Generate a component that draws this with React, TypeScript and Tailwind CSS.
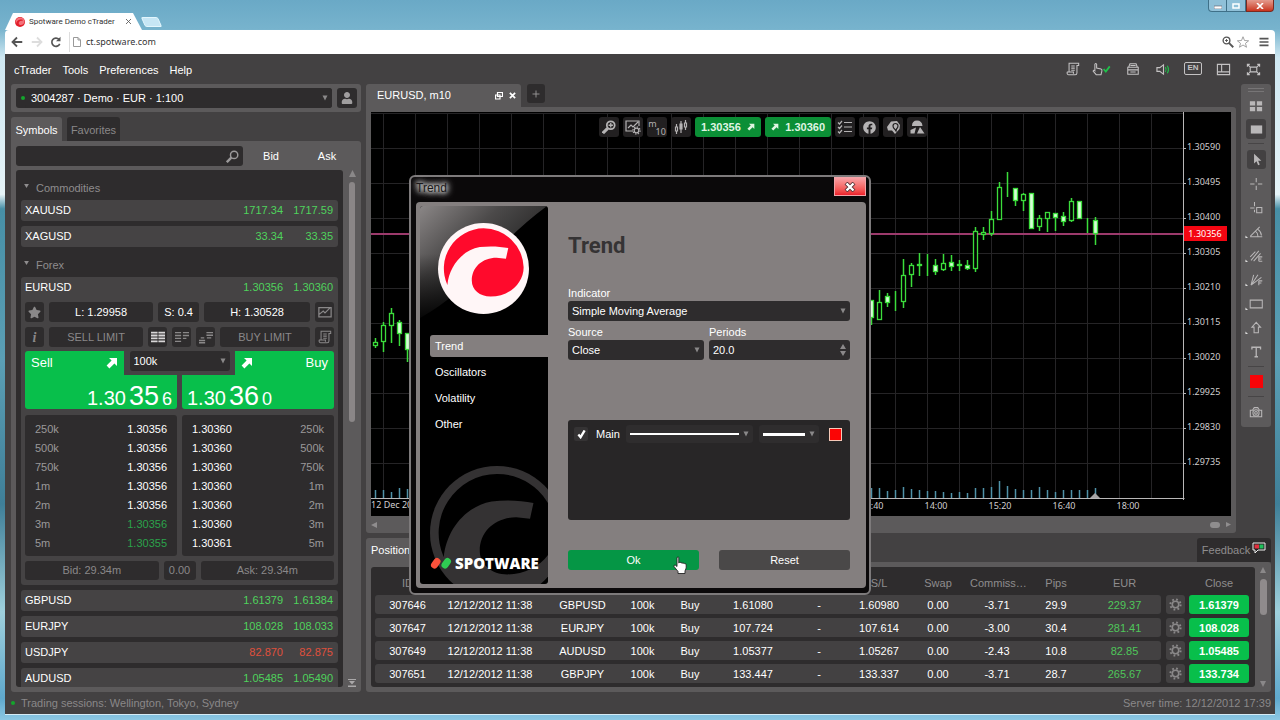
import type { ReactNode } from "react";
import { FaFacebook, FaStar, FaUser } from "react-icons/fa";

type Candle = [x: number, high: number, top: number, bottom: number, low: number, filled: 0 | 1];

const candles: Candle[] = [
  [375, 338, 342, 346, 348, 0],
  [383, 322, 325, 342, 352, 0],
  [391, 308, 313, 326, 343, 0],
  [399, 320, 322, 334, 346, 1],
  [407, 333, 333, 350, 362, 1],
  [871, 300, 300, 318, 325, 1],
  [879, 290, 302, 320, 320, 0],
  [887, 293, 296, 303, 307, 1],
  [895, 291, 302, 302, 311, 0],
  [903, 259, 275, 302, 308, 0],
  [911, 263, 265, 275, 287, 0],
  [919, 253, 264, 266, 276, 0],
  [927, 254, 265, 265, 276, 0],
  [935, 259, 265, 272, 275, 1],
  [943, 254, 263, 270, 271, 0],
  [951, 255, 262, 267, 271, 1],
  [959, 260, 264, 266, 271, 0],
  [967, 260, 265, 269, 270, 1],
  [975, 227, 231, 269, 272, 0],
  [983, 227, 232, 235, 240, 0],
  [991, 211, 219, 234, 236, 0],
  [999, 182, 187, 220, 220, 0],
  [1007, 172, 187, 187, 197, 0],
  [1015, 188, 188, 201, 206, 1],
  [1023, 193, 194, 201, 211, 0],
  [1031, 193, 193, 229, 229, 1],
  [1039, 215, 218, 227, 231, 0],
  [1047, 212, 212, 219, 232, 0],
  [1055, 213, 213, 218, 231, 1],
  [1063, 212, 216, 222, 226, 1],
  [1071, 198, 201, 221, 222, 0],
  [1079, 201, 201, 219, 219, 1],
  [1087, 218, 219, 219, 233, 0],
  [1095, 217, 220, 234, 245, 1],
];

const volumes = [
  10, 10, 7, 8, 11, 9, 8, 7, 7, 6, 5, 6, 5, 10, 10, 11, 17, 12, 9, 8, 8, 11, 8, 6, 8, 8, 8, 8, 10,
];

const priceLabels = [
  "1.30590", "1.30495", "1.30400", "1.30305", "1.30210", "1.30115", "1.30020", "1.29925", "1.29830", "1.29735",
];

const timeLabels: [number, string][] = [
  [872, "12:40"],
  [936, "14:00"],
  [1000, "15:20"],
  [1064, "16:40"],
  [1128, "18:00"],
];

const depth = [
  ["250k", "1.30356", "1.30360"],
  ["500k", "1.30356", "1.30360"],
  ["750k", "1.30356", "1.30360"],
  ["1m", "1.30356", "1.30360"],
  ["2m", "1.30356", "1.30360"],
  ["3m", "1.30356", "1.30360"],
  ["5m", "1.30355", "1.30361"],
];

const positions = [
  ["307646", "12/12/2012 11:38", "GBPUSD", "100k", "Buy", "1.61080", "-", "1.60980", "0.00", "-3.71", "29.9", "229.37", "1.61379"],
  ["307647", "12/12/2012 11:38", "EURJPY", "100k", "Buy", "107.724", "-", "107.614", "0.00", "-3.00", "30.4", "281.41", "108.028"],
  ["307649", "12/12/2012 11:38", "AUDUSD", "100k", "Buy", "1.05377", "-", "1.05267", "0.00", "-2.43", "10.8", "82.85", "1.05485"],
  ["307651", "12/12/2012 11:38", "GBPJPY", "100k", "Buy", "133.447", "-", "133.337", "0.00", "-3.71", "28.7", "265.67", "133.734"],
];

const headers = ["ID", "Created", "Symbol", "Vol.", "Side", "Entry", "T/P", "S/L", "Swap", "Commiss…", "Pips", "EUR"];

function Glyph({ children, className = "size-4" }: { children: ReactNode; className?: string }) {
  return (
    <svg viewBox="0 0 16 16" className={className} fill="none" stroke="currentColor" strokeWidth="1.2" aria-hidden="true">
      {children}
    </svg>
  );
}

const Caret = ({ className = "" }: { className?: string }) => (
  <svg viewBox="0 0 6 6" className={`pointer-events-none size-[6px] fill-[#8a8889] ${className}`} aria-hidden="true">
    <path d="M.5 .5h5L3 5.500z" />
  </svg>
);

function Select({ label, options, className = "" }: { label: string; options: string[]; className?: string }) {
  return (
    <div className={`grid items-center rounded-[3px] bg-[#2e2c2d] ${className}`}>
      <select aria-label={label} className="col-start-1 row-start-1 h-full w-full appearance-none bg-transparent pl-1 pr-4 text-[11px] text-white outline-none">
        {options.map((o) => (
          <option key={o}>{o}</option>
        ))}
      </select>
      <Caret className="col-start-1 row-start-1 mr-1 justify-self-end" />
    </div>
  );
}

function Brand({ disc, inner, className }: { disc: string; inner: string; className: string }) {
  return (
    <svg viewBox="115 158 272 272" className={className} aria-hidden="true">
      <circle cx="251" cy="294" r="136" fill={disc} />
      <path
        fill={inner}
        d="M143 343A120 120 0 0 1 251 174A120 120 0 0 1 371 290C371 340 325 378 272 378C240 378 216 358 216 330C216 290 248 262 290 262L318 265L325 233C300 228 270 226 240 230C185 240 148 290 143 343Z"
      />
    </svg>
  );
}

const Arrow = ({ className = "size-3" }: { className?: string }) => (
  <svg viewBox="0 0 12 12" className={className} fill="currentColor" aria-hidden="true">
    <path d="M3 1h8v8L8.400 6.400 3.400 11.400 .6 8.600 5.600 3.600z" />
  </svg>
);

function BrowserChrome() {
  return (
    <header className="shrink-0 text-[#333]">
      <div className="flex h-[30px] items-end justify-between">
        <div className="flex h-full items-end pl-[5px]">
          <div className="flex h-[17px] w-[137px] items-center gap-1 bg-white pl-2.5 font-['Roboto',sans-serif] text-[8px] [clip-path:polygon(8px_0,128px_0,100%_100%,0_100%)]">
            <Brand disc="#e3202b" inner="#f4737b" className="size-[10px]" />
            <span className="grow whitespace-nowrap">Spotware Demo cTrader</span>
            <button aria-label="Close tab" className="mr-[11px] leading-none">
              <svg viewBox="0 0 6 6" className="size-[5px] stroke-[#555]"><path d="M0 0l6 6M6 0L0 6" /></svg>
            </button>
          </div>
          <button aria-label="New tab" className="mb-[3px] ml-px h-[10px] w-[17px] skew-x-[24deg] rounded-[2px] border border-[#e3f6fd] bg-[#c6e6f5]" />
        </div>
        <div className="flex h-full items-start pr-1.5">
          <button aria-label="Minimise" className="flex h-[12px] w-[19px] items-center justify-center rounded-bl border border-t-0 border-[#3f7088] bg-[#8fc0d8]">
            <svg viewBox="0 0 8 6" className="h-[6px] w-[8px]"><path d="M0 3h8v3H0z" fill="#fff" stroke="#556" strokeWidth=".6" /></svg>
          </button>
          <button aria-label="Maximise" className="flex h-[12px] w-[19px] items-center justify-center border border-l-0 border-t-0 border-[#3f7088] bg-[#8fc0d8]">
            <svg viewBox="0 0 8 6" className="h-[6px] w-[8px]"><path d="M1 1h6v4H1z" fill="none" stroke="#fff" strokeWidth="1.500" /></svg>
          </button>
          <button aria-label="Close window" className="flex h-[12px] w-[28px] items-center justify-center rounded-br border border-t-0 border-[#7c2a20] bg-linear-to-b from-[#e39a8d] to-[#c8321c]">
            <svg viewBox="0 0 8 6" className="h-[6px] w-[8px]"><path d="M1 0l6 6M7 0L1 6" stroke="#fff" strokeWidth="1.600" /></svg>
          </button>
        </div>
      </div>
      <div className="mx-[5px] flex h-6 items-center rounded-t-sm bg-white pl-1.5 pr-[5px]">
        <button aria-label="Back" className="text-[#555]">
          <Glyph className="size-3"><path d="M15 8H2M8 2L2 8l6 6" strokeWidth="2.400" /></Glyph>
        </button>
        <button aria-label="Forward" className="ml-2 text-[#ddd]">
          <Glyph className="size-3"><path d="M1 8h13M8 2l6 6-6 6" strokeWidth="2.400" /></Glyph>
        </button>
        <button aria-label="Reload" className="ml-[7px] text-[#555]">
          <Glyph className="size-3"><path d="M13 10.500A5.500 5.500 0 1 1 12 4.500" strokeWidth="2.200" /><path d="M14 1v6H8z" fill="currentColor" stroke="none" /></Glyph>
        </button>
        <span className="ml-[7px] h-5 border-l border-[#ddd]" />
        <svg viewBox="0 0 8 10" className="ml-[3px] h-[10px] w-2" fill="#fff" stroke="#999"><path d="M.5.5h4.500l2.500 2.500v6.500h-7zM5 .5V3h2.500" /></svg>
        <input aria-label="Address" defaultValue="ct.spotware.com" className="ml-[5px] w-0 grow bg-transparent font-['Noto_Sans',sans-serif] text-[9px] outline-none" />
        <div className="flex items-center gap-[3px] text-[#555]">
          <Glyph className="size-3"><circle cx="6" cy="6" r="4.500" strokeWidth="1.800" /><path d="M9.500 9.500L15 15" strokeWidth="2.500" /><path d="M4 6h4M6 4v4" /></Glyph>
          <Glyph className="size-3 text-[#999]"><path d="M8 1l2 5 5.500.4-4.200 3.400 1.400 5.200L8 12l-4.700 3 1.400-5.200L.5 6.400 6 6z" /></Glyph>
          <Glyph className="ml-[6px] size-3"><path d="M2 3.500h12M2 8h12M2 12.500h12" strokeWidth="2.200" /></Glyph>
        </div>
      </div>
    </header>
  );
}

const ScrollGlyph = (
  <path d="M3.500 1.500h11v2.500h-2v8.500a2 2 0 0 1-2 2h-7a2 2 0 0 1-2-3h2zM6 4.500h4M6 7h4M6 9.500h4M3.500 11.500h5v2" />
);

function MenuBar() {
  return (
    <div className="flex h-[30px] shrink-0 items-center justify-between pl-[9px] pr-[13px]">
      <nav className="flex gap-[11px] pt-[2px]">
        {["cTrader", "Tools", "Preferences", "Help"].map((m) => (
          <button key={m}>{m}</button>
        ))}
      </nav>
      <div className="flex gap-3 text-[#c4c2c3]">
        <button aria-label="Journal" className="flex w-[18px] justify-center"><Glyph className="size-[14px]">{ScrollGlyph}</Glyph></button>
        <button aria-label="One-click trading" className="-ml-1 flex w-[22px] justify-center">
          <svg viewBox="0 0 22 16" className="h-[14px] w-[20px]" fill="none" stroke="currentColor" strokeWidth="1.200">
            <path d="M4 9V2.500q1-1.500 2 0V7l5 1q1.500.5 1 2.500l-1 4H5.500L2 10.500q.5-2 2-.500z" />
            <path d="M14 8l2.500 3L21 5" stroke="#1fc24a" strokeWidth="2" />
          </svg>
        </button>
        <button aria-label="Deposit" className="flex w-[18px] justify-center"><Glyph className="size-[14px]"><path d="M2 6h12v8H2zM3 6l1.500-4h7L13 6M2 9h12M5 4h6M5 11.500h6" /></Glyph></button>
        <button aria-label="Sound" className="flex w-[18px] justify-center">
          <Glyph className="size-[15px]"><path d="M1 6h3l4-3v10l-4-3H1z" /><path d="M10 5.500q1.500 2.500 0 5M12 4q2.500 4 0 8" stroke="#1fc24a" /></Glyph>
        </button>
        <button aria-label="Language" className="flex h-[13px] w-[18px] items-center justify-center rounded-[2px] border border-[#c4c2c3] text-[8px] font-bold leading-none">EN</button>
        <button aria-label="Layout" className="flex w-[18px] justify-center"><Glyph className="size-[15px]"><path d="M1.500 2.500h13v11h-13zM6 2.500v8M6 10.500h8.500M1.500 10.500H6" /></Glyph></button>
        <button aria-label="Full screen" className="flex w-[18px] justify-center"><Glyph className="size-[15px]"><path d="M4.500 5.500h7v5h-7zM1.500 5V2.500H4M12 2.500h2.500V5M14.500 11v2.500H12M4 13.500H1.500V11M2 3l2.500 2.500M14 3l-2.500 2.500M2 13l2.500-2.500M14 13l-2.500-2.500" /></Glyph></button>
      </div>
    </div>
  );
}

function SymbolRow({ name, bid, ask, down }: { name: string; bid: string; ask: string; down?: boolean }) {
  return (
    <div className="flex h-[21px] shrink-0 items-center rounded-[3px] bg-[#454344] pl-1 pr-[5px]">
      <span className="grow">{name}</span>
      <span className={`w-[50px] text-right ${down ? "text-[#e0503c]" : "text-[#4fd25c]"}`}>{bid}</span>
      <span className={`w-[50px] text-right ${down ? "text-[#e0503c]" : "text-[#4fd25c]"}`}>{ask}</span>
    </div>
  );
}

const GroupTitle = ({ children }: { children: ReactNode }) => (
  <button className="flex items-center gap-[7px] px-[3px] text-[#8f8d8e]">
    <svg viewBox="0 0 6 5" className="mb-1 h-1 w-[5px] fill-[#8f8d8e]"><path d="M0 0h6L3 5z" /></svg>
    {children}
  </button>
);

const tile = "flex items-center justify-center rounded-[3px] bg-[#2e2c2d]";

function EurUsdCard() {
  return (
    <section className="flex shrink-0 flex-col rounded-[3px] bg-[#454344] px-1 pb-[5px]">
      <div className="flex h-[25px] items-center pb-1 pr-px">
        <span className="grow">EURUSD</span>
        <span className="w-[50px] text-right text-[#4fd25c]">1.30356</span>
        <span className="w-[50px] text-right text-[#4fd25c]">1.30360</span>
      </div>
      <div className="flex h-5 gap-[5px]">
        <button aria-label="Favourite" className={`${tile} w-[19px] text-[#8a8889]`}><FaStar size={13} /></button>
        <span className={`${tile} grow`}>L: 1.29958</span>
        <span className={`${tile} w-[41px]`}>S: 0.4</span>
        <span className={`${tile} grow`}>H: 1.30528</span>
        <button aria-label="Open chart" className={`${tile} w-[19px] text-[#8a8889]`}>
          <Glyph className="size-[14px]"><path d="M1 3h14v10.500H1zM1 11l5-4 2 2 6-6" strokeWidth="1.400" /></Glyph>
        </button>
      </div>
      <div className="mt-[5px] flex h-5 gap-[5px] text-[#8a8889]">
        <button aria-label="Symbol info" className={`${tile} w-[19px] font-['Liberation_Serif',serif] text-[14px] font-bold italic`}>i</button>
        <button className={`${tile} grow`}>SELL LIMIT</button>
        <button aria-label="Standard depth" className={`${tile} w-[19px] text-[#d8d6d7]`}><Glyph className="size-[14px]"><path d="M0 3h7.500M0 6.300h7.500M0 9.600h7.500M0 13h7.500M8.500 3H16M8.500 6.300H16M8.500 9.600H16M8.500 13H16" strokeWidth="2.200" /></Glyph></button>
        <button aria-label="Price depth" className={`${tile} w-[19px]`}><Glyph className="size-[14px]"><path d="M0 3h7M0 6.300h7M0 9.600h7M0 13h7M9 3h7M9 6.300h7M9 9.600h4" strokeWidth="1.600" /></Glyph></button>
        <button aria-label="VWAP depth" className={`${tile} w-[19px]`}><Glyph className="size-[14px]"><path d="M2 9h4M0 12h7M0 14.500h7M8.500 3H16M8.500 6H16M9 9h5" strokeWidth="1.600" /></Glyph></button>
        <button className={`${tile} grow`}>BUY LIMIT</button>
        <button aria-label="Contract details" className={`${tile} w-[19px]`}><Glyph className="size-[14px]">{ScrollGlyph}</Glyph></button>
      </div>
      <div className="relative mt-1 grid h-[58px] grid-cols-2 gap-[5px]">
        <button className="flex flex-col justify-between rounded-[3px] bg-[#08bf4b] text-[13px] [clip-path:polygon(0_0,99px_0,99px_24px,100%_24px,100%_100%,0_100%)]">
          <span className="flex w-[99px] items-center justify-between px-1.5 pt-1 leading-4">Sell <Arrow className="size-[12px]" /></span>
          <span className="flex items-baseline justify-end gap-[3px] self-end pr-[5px] text-[20px] leading-[20px]">
            1.30 <span className="text-[27px]">35</span> <span className="text-[18px]">6</span>
          </span>
        </button>
        <button className="flex flex-col items-end justify-between rounded-[3px] bg-[#08bf4b] text-[13px] [clip-path:polygon(53px_0,100%_0,100%_100%,0_100%,0_24px,53px_24px)]">
          <span className="flex w-[99px] items-center justify-between px-1.5 pt-1 leading-4"><Arrow className="size-[12px]" /> Buy</span>
          <span className="flex items-baseline gap-[3px] self-start pl-[5px] text-[20px] leading-[20px]">
            1.30 <span className="text-[27px]">36</span> <span className="text-[18px]">0</span>
          </span>
        </button>
        <div className="absolute inset-x-0 top-0 mx-auto w-[100px]">
          <Select label="Volume" options={["100k", "250k", "500k"]} className="h-5" />
        </div>
      </div>
      <div className="mt-1.5 grid grid-cols-2 gap-[5px] leading-[19px]">
        <ul className="rounded-[3px] bg-[#2e2c2d] px-2.5 pb-[3px] pt-[5px]">
          {depth.map(([vol, bid], i) => (
            <li key={vol} className="flex justify-between">
              <span className="text-[#9b999a]">{vol}</span>
              <span className={i > 4 ? "text-[#2ba34b]" : ""}>{bid}</span>
            </li>
          ))}
        </ul>
        <ul className="rounded-[3px] bg-[#2e2c2d] px-2.5 pb-[3px] pt-[5px]">
          {depth.map(([vol, , ask]) => (
            <li key={vol} className="flex justify-between">
              <span>{ask}</span>
              <span className="text-[#9b999a]">{vol}</span>
            </li>
          ))}
        </ul>
      </div>
      <div className="mt-[5px] flex h-[19px] gap-[5px] text-[#8a8889]">
        <span className={`${tile} flex-1`}>Bid: 29.34m</span>
        <span className={`${tile} w-8`}>0.00</span>
        <span className={`${tile} flex-1`}>Ask: 29.34m</span>
      </div>
    </section>
  );
}

function SymbolsSidebar() {
  return (
    <aside className="flex w-[350px] shrink-0 flex-col">
      <div className="flex h-7 shrink-0 gap-[5px] rounded-[3px] bg-[#5c5a5b] p-1 pl-[5px]">
        <div className="flex grow items-center rounded-[3px] bg-[#2e2c2d] pl-[5px]">
          <span className="size-1 rounded-full bg-[#14a52c]" />
          <Select label="Account" options={["3004287 · Demo · EUR · 1:100"]} className="h-5 grow pl-0.5" />
        </div>
        <button aria-label="Profile" className={`${tile} w-5 text-[#a09e9f]`}><FaUser size={12} /></button>
      </div>
      <div className="mt-[5px] flex h-6 shrink-0 gap-[5px]">
        <button className="w-[51px] rounded-t-[3px] bg-[#5c5a5b] pt-[2px]">Symbols</button>
        <button className="w-[53px] rounded-t-[3px] bg-[#2e2c2d] pt-[2px] text-[#8a8889]">Favorites</button>
      </div>
      <div className="flex min-h-0 grow flex-col rounded-[3px] rounded-tl-none bg-[#5c5a5b] py-[5px] pl-[5px]">
        <div className="flex shrink-0 items-center">
          <label className="flex h-5 w-[227px] items-center rounded-[3px] bg-[#2e2c2d] px-1 text-[#9b999a]">
            <input aria-label="Search symbols" className="w-0 grow bg-transparent outline-none" />
            <Glyph className="size-[13px]"><circle cx="10" cy="6" r="4.500" strokeWidth="1.800" /><path d="M6.500 9.500L1 15" strokeWidth="3" /></Glyph>
          </label>
          <span className="w-14 text-center">Bid</span>
          <span className="w-14 text-center">Ask</span>
        </div>
        <div className="mt-1 flex min-h-0 grow">
          <div className="flex grow flex-col overflow-hidden rounded-[3px] bg-[#2e2c2d] px-[5px]">
            <div className="flex h-[30px] shrink-0 items-center pt-[6px]"><GroupTitle>Commodities</GroupTitle></div>
            <div className="flex shrink-0 flex-col gap-[5px]">
              <SymbolRow name="XAUUSD" bid="1717.34" ask="1717.59" />
              <SymbolRow name="XAGUSD" bid="33.34" ask="33.35" />
            </div>
            <div className="flex h-[30px] shrink-0 items-center pt-[6px]"><GroupTitle>Forex</GroupTitle></div>
            <div className="flex shrink-0 flex-col gap-[5px]">
              <EurUsdCard />
              <SymbolRow name="GBPUSD" bid="1.61379" ask="1.61384" />
              <SymbolRow name="EURJPY" bid="108.028" ask="108.033" />
              <SymbolRow name="USDJPY" bid="82.870" ask="82.875" down />
              <SymbolRow name="AUDUSD" bid="1.05485" ask="1.05490" />
            </div>
          </div>
          <div className="flex w-[18px] shrink-0 flex-col items-center justify-between">
            <div className="flex flex-col items-center gap-[5px]">
              <svg viewBox="0 0 6 6" className="size-[7px] fill-[#8a8889]"><path d="M3 0l3 6H0z" /></svg>
              <div className="h-[240px] w-1.5 rounded-full bg-[#8a8687]" />
            </div>
            <svg viewBox="0 0 8 8" className="size-2 fill-[#aaa8a9]"><path d="M0 0h8v1H0zM1 2h6L4 5.500zM0 6.500h8V8H0z" /></svg>
          </div>
        </div>
      </div>
    </aside>
  );
}

function PriceChart() {
  return (
    <svg viewBox="371 112 860 404" preserveAspectRatio="xMaxYMin slice" className="block h-full w-full bg-black" role="img" aria-label="EURUSD m10 price chart">
      <g stroke="#252426">
        {Array.from({ length: 25 }, (_, i) => (
          <path key={i} d={`M${383.500 + i * 32} 113V498`} />
        ))}
        {Array.from({ length: 11 }, (_, i) => (
          <path key={i} d={`M371 ${113.500 + i * 35}H1184`} />
        ))}
      </g>
      <path d="M371 234H1184" stroke="#9c3a6c" strokeWidth="2" />
      {candles.map(([x, high, top, bottom, low, filled]) => (
        <g key={x} stroke="#3bdc3b">
          <path d={`M${x + 0.5} ${high}V${top}M${x + 0.5} ${bottom}V${low}`} strokeWidth="1.500" />
          <rect x={x - 1.5} y={top + 0.5} width="4" height={Math.max(bottom - top - 1, 0)} fill={filled ? "#d6ffd6" : "#000"} strokeWidth="1.300" />
        </g>
      ))}
      <g stroke="#4f92a8" strokeWidth="1.500">
        {volumes.map((v, i) => (
          <path key={i} d={`M${871.500 + i * 8} 498v-${v}`} />
        ))}
        {[8, 8, 6, 10, 9].map((v, i) => (
          <path key={i} d={`M${375.500 + i * 8} 498v-${v}`} />
        ))}
      </g>
      <path d="M371 498.500H1184.500M1183.500 112V500" stroke="#b9b7b8" fill="none" />
      <path d="M1090 498l5-5 5 5z" fill="#a5a3a4" />
      <g fill="#d0cecf" fontFamily="Noto Sans, sans-serif" fontSize="9">
        {priceLabels.map((p, i) => (
          <g key={p}>
            <path d={`M1184 ${148.500 + i * 35}h2`} stroke="#b9b7b8" />
            <text x="1187" y={150 + i * 35}>{p}</text>
          </g>
        ))}
        {timeLabels.map(([x, t]) => (
          <text key={t} x={x} y="509" textAnchor="middle">{t}</text>
        ))}
        <text x="371" y="508">12 Dec 2012</text>
      </g>
      <rect x="1184" y="226" width="43" height="15" fill="#f40612" />
      <text x="1205" y="237" fill="#fff" fontSize="9" textAnchor="middle" fontFamily="Noto Sans, sans-serif">1.30356</text>
    </svg>
  );
}

const chip = "flex size-5 items-center justify-center rounded-[3px] bg-[#222021] text-[#b5b3b4]";
const priceChip = "flex h-5 w-[66px] items-center justify-between rounded-[3px] bg-[#0b8f36] px-1.5 text-[11px] font-bold text-[#dff5e2]";

function ChartToolbar() {
  return (
    <div className="absolute left-[228px] top-[5px] flex gap-1">
      <button aria-label="Zoom" className={chip}><Glyph className="size-[14px]"><circle cx="10" cy="6" r="4.500" strokeWidth="2" /><path d="M6.500 9.500L1 15" strokeWidth="3.500" /><path d="M7.500 6h5M10 3.500v5" strokeWidth="1.500" /></Glyph></button>
      <button aria-label="Indicators" className={chip}><Glyph><path d="M8 12H1V2h13v5M3 9l3-3 2 2 5-5" /><circle cx="11.500" cy="11.500" r="2.300" /><circle cx="11.500" cy="11.500" r="3.600" strokeDasharray="1.400 1.400" /></Glyph></button>
      <button aria-label="Timeframe" className={`${chip} font-['Noto_Sans',sans-serif] text-[9px] leading-none`}>
        <span className="-mt-2">m</span><span className="-ml-px mt-2">10</span>
      </button>
      <button aria-label="Chart type" className={chip}><Glyph><path d="M3.500 5v10M8 2v12M12.500 1v10" /><path d="M2.500 8h2v4h-2zM11.500 4h2v4h-2z" fill="#222021" /><path d="M7 5h2v5H7z" fill="currentColor" /></Glyph></button>
      <button className={priceChip}>1.30356 <Arrow className="size-2" /></button>
      <button className={priceChip}><Arrow className="size-2" /> 1.30360</button>
      <button aria-label="Display options" className={chip}><Glyph><path d="M1 3.500L2.500 5 5 2M1 8l1.500 1.500L5 6.500M1 12.500L2.500 14 5 11M7 3.500h8M7 8h8M7 12.500h8" /></Glyph></button>
      <button aria-label="Share on Facebook" className={chip}><FaFacebook size={13} /></button>
      <button aria-label="Share" className={chip}>
        <Glyph><path d="M2 8l4-5.500 6-.500 3 4-.500 4-4.500 5-3-3.500H3z" fill="currentColor" stroke="none" /><path d="M10.500 4.500a2.500 2.500 0 0 1 2.500 2.500q0 1.500-1.500 3L11 12l-1-1.500q-2-1.500-2-3.500a2.500 2.500 0 0 1 2.500-2.500z" stroke="#222021" /></Glyph>
      </button>
      <button aria-label="Community" className={chip}><Glyph><path d="M3 7q0-5.500 5-5.500T13.500 7zM1.500 14.500V11L7 8.500l-1.500 6zM8 14.500L11 8l4.500 6.500z" fill="currentColor" stroke="none" /></Glyph></button>
    </div>
  );
}

const drawingTools: [string, ReactNode][] = [
  ["Crosshair", <path key="p" d="M8 1v5M8 10v5M1 8h5M10 8h5" />],
  ["Marker", <path key="p" d="M6 1v5M1 8h5M6 10v3M8.500 7.500h6v6h-6z" />],
  ["Angle line", <path key="p" d="M1 13.500h14M1 13L12 2M7 7q3 2 3 6M10 5q4 3 4 7" />],
  ["Equidistant channel", <path key="p" d="M1 9l6-6M2 13l9-11M5 14l8-9M11 9h4M11 11.500h3M11 14h4M11 9v5" />],
  ["Fibonacci fan", <path key="p" d="M2 14L5 2M2 14L10 2M2 14L14 5M11 9h4M11 9v5M11 11.500h3" />],
  ["Rectangle", <path key="p" d="M1 3.500h14v9H1z" />],
  ["Arrow", <path key="p" d="M8 1.500L13 7h-2.500v6.500h-5V7H3z" />],
  ["Text", <path key="p" d="M3 5V2.500h10V5M8 2.500v11M6 13.500h4" strokeWidth="1.500" />],
];

function DrawingToolbar() {
  return (
    <div className="mr-1 flex w-[30px] shrink-0 flex-col items-center self-start rounded-[3px] bg-[#5c5a5b] pb-1 text-[#b9b7b8]">
      <div className="mt-1 h-1 w-4 border-y border-[#777576]" />
      <button aria-label="Multi chart" className="mt-1 flex size-[19px] items-center justify-center"><Glyph className="size-[14px]"><path d="M1 2.500h6v5H1zM9 2.500h6v5H9zM1 9h6v5H1zM9 9h6v5H9z" fill="currentColor" stroke="none" /></Glyph></button>
      <button aria-label="Single chart" className="mt-1 flex size-5 items-center justify-center rounded-[3px] bg-[#434142]"><Glyph className="size-[13px]"><path d="M1 3h14v10H1z" fill="currentColor" stroke="none" /></Glyph></button>
      <div className="mt-1 w-4 border-t border-[#474546]" />
      <button aria-label="Pointer" className="mt-1.5 flex size-[19px] items-center justify-center rounded-[3px] bg-[#434142]"><Glyph className="size-[13px]"><path d="M5 1v12l3-3 2 5 2-1-2-4.500h4z" fill="currentColor" stroke="none" /></Glyph></button>
      <div className="mt-[3px] flex flex-col">
        {drawingTools.map(([name, shape], i) => (
          <button key={name} aria-label={name} className="flex h-6 items-center justify-center">
            <svg viewBox="-5 0 22 16" className="mr-1 h-[14px] w-[19px]" fill="none" stroke="currentColor" strokeWidth="1.200">
              {shape}
              {i > 1 && i < 7 && <path d="M-4.500 12l3 3h-3z" fill="#ddd" stroke="none" />}
            </svg>
          </button>
        ))}
      </div>
      <div className="mt-0.5 w-4 border-t border-[#474546]" />
      <button aria-label="Drawing colour" className="mt-2 size-[13px] bg-[#f80408]" />
      <div className="mt-2 w-4 border-t border-[#474546]" />
      <button aria-label="Snapshot" className="mb-1 mt-2 flex"><Glyph className="size-[14px]"><path d="M1.500 13.500V6H4l2-3h4l2 3h2.500v7.500z" /><circle cx="8" cy="9" r="3.500" /><circle cx="8" cy="9" r="1.500" /></Glyph></button>
    </div>
  );
}

function ChartPanel() {
  return (
    <section className="flex min-w-0 grow flex-col">
      <div className="flex h-[23px] shrink-0 gap-1.5">
        <div className="flex w-[155px] items-center gap-1.5 rounded-t-[3px] bg-[#5c5a5b] pl-[11px] pr-[5px]">
          <button className="grow text-left">EURUSD, m10</button>
          <button aria-label="Detach"><Glyph className="size-2"><path d="M5 1h10v8H5zM1 6h9v8H1z" strokeWidth="2.400" /></Glyph></button>
          <button aria-label="Close chart"><Glyph className="size-[7px]"><path d="M2 2l12 12M14 2L2 14" strokeWidth="4" /></Glyph></button>
        </div>
        <button aria-label="Add chart" className="flex h-[19px] w-[18px] items-center justify-center rounded-[3px] bg-[#2e2c2d] text-[#9b999a]"><Glyph className="size-2"><path d="M8 1v14M1 8h14" strokeWidth="1.800" /></Glyph></button>
      </div>
      <div className="flex min-h-0 grow flex-col rounded-[3px] rounded-tl-none bg-[#5c5a5b] px-[5px] pt-[5px]">
        <div className="relative min-h-0 grow">
          <PriceChart />
          <ChartToolbar />
        </div>
        <div className="flex h-[17px] shrink-0 items-center gap-1.5 text-[#8f8d8e]">
          <svg viewBox="0 0 6 6" className="size-[6px] fill-current"><path d="M6 0v6L0 3z" /></svg>
          <span className="grow" />
          <span className="h-1.5 w-2.5 rounded-full bg-[#8f8d8e]" />
          <svg viewBox="0 0 6 6" className="size-[5px] fill-current"><path d="M0 0v6l6-3z" /></svg>
        </div>
      </div>
    </section>
  );
}

function PositionsPanel() {
  return (
    <section className="mr-1 mt-[5px] flex shrink-0 flex-col">
      <div className="flex h-6 justify-between">
        <button className="w-[62px] rounded-t-[3px] bg-[#5c5a5b] pl-[5px] text-left">Positions</button>
        <button className="flex w-[74px] items-center justify-center gap-0.5 rounded-t-[3px] bg-[#2e2c2d] text-[#8f8d8e]">
          Feedback
          <svg viewBox="0 0 14 12" className="-mt-1 h-[12px] w-[14px] shrink-0">
            <path d="M1 1h12v7H6l-3 3V8H1z" fill="#222" stroke="#eee" />
            <path d="M2.500 2.500H7v4H2.500z" fill="#e4303f" />
            <path d="M7.500 2.500h4v4h-4z" fill="#1fc05a" />
          </svg>
        </button>
      </div>
      <div className="flex rounded-[3px] rounded-tl-none bg-[#5c5a5b] py-[5px] pl-[5px]">
        <div className="grow rounded-[3px] bg-[#2e2c2d] pl-1 pr-1.5">
          <table className="w-full table-fixed border-separate border-spacing-x-0 border-spacing-y-1 text-center leading-[17px]">
            <colgroup>
              <col className="w-[65px]" /><col className="w-[100px]" /><col className="w-[85px]" /><col className="w-[35px]" />
              <col className="w-[60px]" /><col className="w-[66px]" /><col className="w-[66px]" /><col className="w-[54px]" />
              <col className="w-[64px]" /><col className="w-[54px]" /><col className="w-[64px]" /><col className="w-[73px]" />
              <col className="w-[28px]" /><col className="w-[60px]" />
            </colgroup>
            <thead>
              <tr className="h-5 text-[#8f8d8e]">
                {headers.map((h) => (
                  <th key={h} className="whitespace-nowrap p-0 pt-1 font-normal leading-4">{h}</th>
                ))}
                <td />
                <th className="p-0 pt-1 font-normal leading-4">Close</th>
              </tr>
            </thead>
            <tbody>
              {positions.map((row) => (
                <tr key={row[0]}>
                  {row.slice(0, 12).map((cell, i) => (
                    <td key={i} className={`whitespace-nowrap bg-[#434142] p-0 pt-0.5 first:rounded-l-[3px] ${i === 11 ? "rounded-r-[3px] text-[#4fc75a]" : ""}`}>{cell}</td>
                  ))}
                  <td className="p-0">
                    <button aria-label={`Modify ${row[0]}`} className="mx-auto flex size-[19px] items-center justify-center rounded-[3px] bg-[#434142] text-[#8a8889]">
                      <Glyph className="size-[13px]"><circle cx="8" cy="8" r="4" strokeWidth="2" /><circle cx="8" cy="8" r="6.300" strokeWidth="2.400" strokeDasharray="2.200 2.750" /></Glyph>
                    </button>
                  </td>
                  <td className="p-0"><button className="block h-[19px] w-full rounded-[3px] bg-[#08bf4b] pt-0.5 font-bold">{row[12]}</button></td>
                </tr>
              ))}
            </tbody>
          </table>
        </div>
        <div className="flex w-4 shrink-0 flex-col items-center">
          <svg viewBox="0 0 6 6" className="size-[6px] fill-[#8a8889]"><path d="M3 0l3 6H0z" /></svg>
          <div className="mt-1.5 h-9 w-[7px] rounded-full bg-[#8f8b8c]" />
          <svg viewBox="0 0 6 6" className="mt-auto size-[6px] fill-[#8a8889]"><path d="M0 0h6L3 6z" /></svg>
        </div>
      </div>
    </section>
  );
}

function LineSelect({ label, className, line }: { label: string; className: string; line: string }) {
  return (
    <div className={`grid items-center rounded-[3px] bg-[#2f2d2e] ${className}`}>
      <select aria-label={label} className="col-start-1 row-start-1 h-full w-full appearance-none bg-transparent text-transparent outline-none">
        <option aria-label="Solid" value="solid" />
      </select>
      <div className="pointer-events-none col-start-1 row-start-1 flex items-center gap-1 px-1">
        <span className={`grow bg-white ${line}`} />
        <Caret />
      </div>
    </div>
  );
}

function TrendDialog() {
  return (
    <div className="absolute inset-x-0 top-[175px] flex justify-center">
      <div role="dialog" aria-labelledby="dialog-title" className="relative flex h-[420px] w-[462px] flex-col rounded-md border-2 border-[#7d7a7b] bg-[#0b090a] pb-[5px] pl-[5px] pr-[3px]">
        <div className="flex h-[25px] shrink-0 items-start justify-between">
          <span id="dialog-title" className="text-[12px] leading-[22px] text-[#1a1819] [text-shadow:0_0_4px_#fff,0_0_6px_#fff,0_0_8px_#ddd,0_0_10px_#bbb]">Trend</span>
          <button aria-label="Close dialog" className="flex h-[19px] w-8 items-center justify-center border border-[#f3a3a8] bg-linear-to-b from-[#f8a0a5] to-[#ee1c2b]">
            <svg viewBox="0 0 12 10" className="h-[10px] w-3"><path d="M2 1l8 8M10 1L2 9" stroke="#5a3438" strokeWidth="4" /><path d="M2.500 1.500l7 7M9.500 1.500l-7 7" stroke="#fff" strokeWidth="2.400" /></svg>
          </button>
        </div>
        <div className="flex min-h-0 grow gap-5 rounded-sm bg-[#847f7f] p-1 pr-4">
          <nav className="relative w-32 shrink-0 overflow-hidden rounded-[3px] bg-black pl-2.5">
            <svg viewBox="0 0 128 120" className="absolute left-0 top-0 h-[120px] w-32" aria-hidden="true">
              <defs>
                <linearGradient id="shine" x1="0" y1="0" x2="0.75" y2="0.7">
                  <stop offset="0" stopColor="#8a8686" />
                  <stop offset=".45" stopColor="#4c4a4a" />
                  <stop offset="1" stopColor="#1c1c1c" />
                </linearGradient>
                <linearGradient id="fade" x1="0" y1="0" x2="0" y2="1">
                  <stop offset=".4" stopColor="#000" stopOpacity="0" />
                  <stop offset="1" stopColor="#000" />
                </linearGradient>
              </defs>
              <path d="M0 0H127Q100 20 80 42Q40 90 0 112z" fill="url(#shine)" />
              <path d="M0 0H128V120H0z" fill="url(#fade)" />
            </svg>
            <Brand disc="#fff6f7" inner="#ff0a2c" className="relative ml-2 mt-[17px] size-[91px]" />
            <Brand disc="#343233" inner="#000" className="absolute left-2.5 top-[260px] size-[134px]" />
            <ul className="relative mt-[21px] flex flex-col gap-1">
              {["Trend", "Oscillators", "Volatility", "Other"].map((t) => (
                <li key={t}>
                  <button className={`block h-[22px] w-full rounded-l-[3px] pl-[5px] text-left ${t === "Trend" ? "bg-[#847f7f]" : ""}`}>{t}</button>
                </li>
              ))}
            </ul>
            <div className="absolute bottom-[11px] left-2.5 flex items-center gap-[3px]">
              <svg viewBox="0 0 22 14" className="h-[14px] w-[22px]" strokeWidth="7" strokeLinecap="round">
                <path d="M4.500 9L7 5.500" stroke="#f9513b" />
                <path d="M15 9L17.500 5.500" stroke="#2fcb52" />
              </svg>
              <span className="font-['Open_Sans',sans-serif] text-[15px] font-extrabold leading-5">SPOTWARE</span>
            </div>
          </nav>
          <form className="flex min-w-0 grow flex-col pb-[14px]" onSubmit={(e) => e.preventDefault()}>
            <h2 className="mt-[26px] font-['Roboto',sans-serif] text-[22px] font-bold leading-7 text-[#353334]">Trend</h2>
            <div className="mt-[26px] leading-[15px]">Indicator</div>
            <Select label="Indicator" options={["Simple Moving Average"]} className="h-5" />
            <div className="mt-1 grid grid-cols-[136px_1fr] gap-x-[5px]">
              <div>
                <div className="leading-[15px]">Source</div>
                <Select label="Source" options={["Close", "Open", "High", "Low"]} className="h-5" />
              </div>
              <div>
                <label htmlFor="periods" className="block leading-[15px]">Periods</label>
                <div className="flex h-5 items-center rounded-[3px] bg-[#2e2c2d] px-1">
                  <input id="periods" inputMode="decimal" defaultValue="20.0" className="w-0 grow bg-transparent outline-none" />
                  <div className="flex flex-col gap-0.5">
                    <button type="button" aria-label="Increase"><svg viewBox="0 0 6 5" className="h-[5px] w-[6px] fill-[#8a8889]"><path d="M3 0l3 5H0z" /></svg></button>
                    <button type="button" aria-label="Decrease"><svg viewBox="0 0 6 5" className="h-[5px] w-[6px] fill-[#8a8889]"><path d="M0 0h6L3 5z" /></svg></button>
                  </div>
                </div>
              </div>
            </div>
            <div className="mt-[60px] h-[100px] rounded-[3px] bg-[#282627] py-[5px] pl-1.5 pr-2">
              <div className="flex h-[18px] items-center">
                <label className="flex items-center gap-2">
                  <span className="grid size-[14px] place-items-center rounded-[2px] bg-[#353334]">
                    <input type="checkbox" defaultChecked className="col-start-1 row-start-1 size-[14px] appearance-none" />
                    <svg viewBox="0 0 10 10" className="pointer-events-none col-start-1 row-start-1 size-[9px]"><path d="M1.500 5l2.500 3 4.500-7.500" fill="none" stroke="#fff" strokeWidth="2.600" /></svg>
                  </span>
                  Main
                </label>
                <LineSelect label="Line style" className="ml-1.5 h-[18px] grow" line="h-[2px]" />
                <LineSelect label="Line width" className="ml-1.5 h-[18px] w-[60px]" line="h-[3px]" />
                <button type="button" aria-label="Line colour" className="ml-2.5 size-[13px] border border-[#f6c9b8] bg-[#fb0505]" />
              </div>
            </div>
            <div className="mt-auto grid grid-cols-2 gap-5">
              <button className="h-5 rounded-[3px] bg-[#059645]">Ok</button>
              <button type="reset" className="h-5 rounded-[3px] bg-[#4a4848]">Reset</button>
            </div>
          </form>
        </div>
        <svg viewBox="0 0 14 18" className="absolute left-[262px] top-[379px] h-[18px] w-[14px]" aria-hidden="true">
          <path d="M4 1.500q1.200-1.200 1.800 0V7l1-.8q1 0 1.200.8 1.200-.8 1.800.3 1.500-.6 1.800.4 1.600-.2 1.600 1V12l-1.200 3v2.500H5V15.500L1 10.500q-.3-1.700 1.200-1.500L4 10.500z" fill="#fff" stroke="#222" strokeWidth=".9" />
        </svg>
      </div>
    </div>
  );
}

export default function App() {
  return (
    <div className="relative flex h-screen min-h-[600px] flex-col overflow-hidden bg-[linear-gradient(180deg,#6aa9c6_0%,#77b3cd_4%,#cfe8f2_8%,#e6f4f8_27%,#478fa6_29%,#5b9fb5_50%,#3f7f98_70%,#9fd0dc_85%,#5fa8cc_97%,#8cc8e4_100%)] font-['Liberation_Sans',Arial,sans-serif] text-[11px] text-white">
      <BrowserChrome />
      <div className="mx-[5px] mb-[5px] flex min-h-0 grow flex-col border-b border-[#d5ecf6] bg-[#434142]">
        <MenuBar />
        <main className="flex min-h-0 grow gap-[5px] pl-1.5">
          <SymbolsSidebar />
          <div className="flex min-w-0 grow flex-col">
            <div className="flex min-h-0 grow gap-[5px]">
              <ChartPanel />
              <DrawingToolbar />
            </div>
            <PositionsPanel />
          </div>
        </main>
        <footer className="flex h-[22px] shrink-0 items-center justify-between pl-1.5 pr-1 text-[#8a8889]">
          <span className="flex items-center gap-1.5"><span className="size-1 rounded-full bg-[#14a52c]" />Trading sessions: Wellington, Tokyo, Sydney</span>
          <span>Server time: 12/12/2012 17:39</span>
        </footer>
      </div>
      <TrendDialog />
    </div>
  );
}
